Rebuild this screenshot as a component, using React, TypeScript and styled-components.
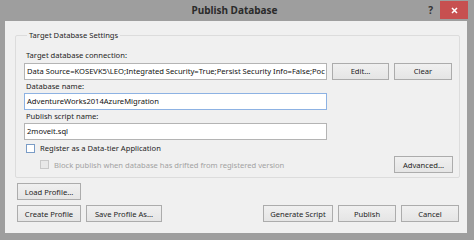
import { FC } from "react";
import styled, { createGlobalStyle } from "styled-components";

const GlobalStyle = createGlobalStyle`
  html, body {
    margin: 0;
    padding: 0;
    background: #9e9e9e;
  }
  * {
    box-sizing: border-box;
  }
`;

const uiFont = `"Noto Sans", "Open Sans", "Liberation Sans", sans-serif`;

const App: FC = () => {
  return (
    <>
      <GlobalStyle />
      <Window>
        <TitleBar>
          <span />
          <Title>Publish Database</Title>
          <TitleControls>
            <HelpGlyph>?</HelpGlyph>
            <CloseButton>
              <svg width="7" height="7" viewBox="0 0 7 7">
                <path d="M1 1L6 6M6 1L1 6" stroke="#fff" strokeWidth="1.5" />
              </svg>
            </CloseButton>
          </TitleControls>
        </TitleBar>
        <Client>
          <GroupBox>
            <Legend>Target Database Settings</Legend>
            <FieldLabel>Target database connection:</FieldLabel>
            <InputRow>
              <TextBox $width={303}>
                Data Source=KOSEVK5\LEO;Integrated Security=True;Persist Security Info=False;Poc
              </TextBox>
              <Button $width={57}>Edit...</Button>
              <Button $width={58}>Clear</Button>
            </InputRow>
            <FieldLabel>Database name:</FieldLabel>
            <TextBox $width={303} $focused>
              AdventureWorks2014AzureMigration
            </TextBox>
            <FieldLabel>Publish script name:</FieldLabel>
            <TextBox $width={303}>2moveit.sql</TextBox>
            <CheckRow>
              <CheckBox />
              <CheckText>Register as a Data-tier Application</CheckText>
            </CheckRow>
            <OptionRow>
              <CheckRow $indent>
                <CheckBox $disabled />
                <CheckText $disabled>
                  Block publish when database has drifted from registered
                  version
                </CheckText>
              </CheckRow>
              <Button $width={59}>Advanced...</Button>
            </OptionRow>
          </GroupBox>
          <ProfileRow>
            <Button $width={64}>Load Profile...</Button>
          </ProfileRow>
          <ActionRow>
            <ButtonGroup>
              <Button $width={64}>Create Profile</Button>
              <Button $width={76}>Save Profile As...</Button>
            </ButtonGroup>
            <ButtonGroup>
              <Button $width={70}>Generate Script</Button>
              <Button $width={58}>Publish</Button>
              <Button $width={58}>Cancel</Button>
            </ButtonGroup>
          </ActionRow>
        </Client>
      </Window>
    </>
  );
};

const Window = styled.div`
  width: 474px;
  height: 240px;
  display: flex;
  flex-direction: column;
  background: #9e9e9e;
  font-family: ${uiFont};
  font-size: 7.6px;
  color: #1e1e1e;
`;

const TitleBar = styled.div`
  height: 21px;
  display: grid;
  grid-template-columns: 1fr auto 1fr;
  align-items: start;
  padding-right: 6px;
`;

const Title = styled.div`
  font-size: 10px;
  font-weight: 700;
  color: #2b2b2b;
  line-height: 20px;
  padding-left: 1px;
`;

const TitleControls = styled.div`
  display: flex;
  justify-content: flex-end;
  align-items: flex-start;
`;

const HelpGlyph = styled.span`
  font-size: 10px;
  font-weight: 700;
  color: #333;
  line-height: 20px;
  margin-right: 7px;
`;

const CloseButton = styled.div`
  width: 28px;
  height: 18px;
  margin-top: 1px;
  background: #c75050;
  display: flex;
  align-items: center;
  justify-content: center;
`;

const Client = styled.div`
  flex: 1;
  margin: 0 7px 7px 5px;
  background: #f0f0f0;
  padding: 8px 7px 0 10px;
  display: flex;
  flex-direction: column;
`;

const GroupBox = styled.fieldset`
  margin: 0;
  padding: 8px 6px 4px 8px;
  border: 1px solid #dcdcdc;
  border-radius: 2px;
  display: flex;
  flex-direction: column;
  align-items: flex-start;
  min-width: 0;
`;

const Legend = styled.legend`
  padding: 0 2px;
  margin-left: 3px;
  line-height: 12px;
`;

const FieldLabel = styled.div`
  padding-left: 2px;
  line-height: 12px;
  margin-bottom: 1px;
`;

const InputRow = styled.div`
  display: flex;
  align-items: center;
  gap: 5px;
  height: 18px;
`;

const TextBox = styled.div<{ $width: number; $focused?: boolean }>`
  width: ${(p) => p.$width}px;
  height: 17px;
  background: #fff;
  border: 1px solid ${(p) => (p.$focused ? "#8db2e3" : "#b4b4b4")};
  padding: 0 2px;
  line-height: 15px;
  white-space: nowrap;
  overflow: hidden;
  color: #111;
`;

const Button = styled.div<{ $width: number }>`
  width: ${(p) => p.$width}px;
  height: 17px;
  flex: none;
  border: 1px solid #acacac;
  background: linear-gradient(#f0f0f0, #e5e5e5);
  display: flex;
  align-items: center;
  justify-content: center;
  white-space: nowrap;
  color: #1e1e1e;
`;

const CheckRow = styled.div<{ $indent?: boolean }>`
  display: flex;
  align-items: center;
  gap: 5px;
  padding-left: ${(p) => (p.$indent ? 16 : 2)}px;
  height: 12px;
  margin-top: ${(p) => (p.$indent ? 0 : 2)}px;
`;

const CheckBox = styled.div<{ $disabled?: boolean }>`
  width: 9px;
  height: 9px;
  border: 1px solid ${(p) => (p.$disabled ? "#c8c8c8" : "#7a9cc6")};
  background: ${(p) => (p.$disabled ? "#e8e8e8" : "#fff")};
`;

const CheckText = styled.span<{ $disabled?: boolean }>`
  color: ${(p) => (p.$disabled ? "#a2a2a2" : "#1e1e1e")};
  white-space: nowrap;
`;

const OptionRow = styled.div`
  align-self: stretch;
  display: flex;
  justify-content: space-between;
  align-items: center;
  margin-top: 2px;
`;

const ProfileRow = styled.div`
  display: flex;
  padding-left: 2px;
  margin-top: 5px;
`;

const ActionRow = styled.div`
  display: flex;
  justify-content: space-between;
  padding: 0 1px 0 2px;
  margin-top: 5px;
`;

const ButtonGroup = styled.div`
  display: flex;
  gap: 5px;
`;

export default App;
